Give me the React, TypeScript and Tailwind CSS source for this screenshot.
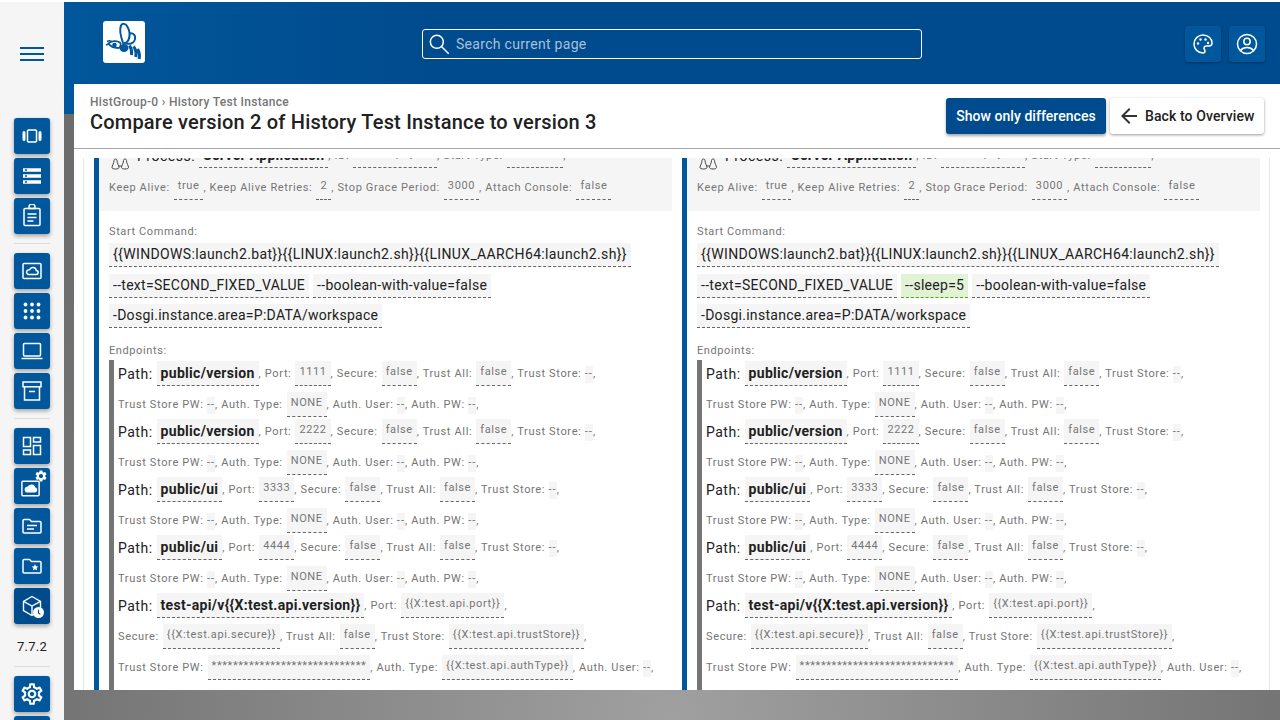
import type { ReactNode } from "react";
import { MdArrowBack, MdOutlineSettings, MdSettings } from "react-icons/md";

function Ico({ children, size = 24 }: { children: ReactNode; size?: number }) {
  return (
    <svg viewBox="0 0 24 24" width={size} height={size} fill="none" stroke="currentColor" strokeWidth="1.5">
      {children}
    </svg>
  );
}

function SideBtn({ children, active }: { children: ReactNode; active?: boolean }) {
  return (
    <div
      className={`relative flex h-9 w-9 shrink-0 items-center justify-center rounded-[3px] text-white shadow-[0_2px_4px_rgba(0,0,0,0.35)] ${
        active ? "bg-[#004b8d]" : "bg-[#01579b]"
      }`}
    >
      {children}
    </div>
  );
}

function Divider() {
  return <div className="my-[9px] h-px w-9 shrink-0 bg-[#dcdcdc]" />;
}

function Bee() {
  return (
    <svg viewBox="0 0 42 42" className="h-[42px] w-[42px]" fill="none" stroke="#01579b">
      <path d="M20 22C17.500 15 16.500 8 18 4.500c1.500-2.500 4.500-2 6 .5 2.500 4 3.500 9 1.500 14-1 2-3.500 3.500-5.500 3z" strokeWidth="2" />
      <path d="M26.500 12.500c2.500-.5 5 .5 5.500 3 .5 3-1 6-4 7-2 .5-4 .5-6-.5" strokeWidth="2" />
      <ellipse cx="21" cy="27" rx="4.500" ry="4" fill="#01579b" stroke="none" />
      <path d="M5.500 22.500c3-3 8.500-3 11.500-1 1.500 2 .5 5.500-2 5.500-4 0-7.500-1.500-9.500-4.500z" strokeWidth="1.800" />
      <circle cx="11.500" cy="24" r="2.300" fill="#01579b" stroke="none" />
      <path d="M9 21c-1-1.500-3-1.500-5-.5M6 23l-3 1" strokeWidth="1.500" />
      <path d="M26.500 24.500c2 3 2.500 6 2 9.500M30.500 25.500c2.500 3 2.800 7 2.300 10.500M34.500 28c2 3 2.300 6.500 1.700 10" strokeWidth="3" />
    </svg>
  );
}

function ProcessIcon() {
  return (
    <svg viewBox="0 0 20 16" className="ml-px mr-[7px] mt-[12px] h-4 w-5 shrink-0" fill="none" stroke="#444" strokeWidth="1">
      <path d="M2 12.500c0-2 2-4 2-7 0-2 3-2 3 0 0 3 2 5 2 7 0 2-7 2-7 0z" />
      <path d="M11.500 12.500c0-2 2-4 2-7 0-2 3-2 3 0 0 3 2 5 2 7 0 2-7 2-7 0z" />
      <path d="M9 11h2.500" />
    </svg>
  );
}

function CubeClock() {
  return (
    <>
      <svg viewBox="0 0 24 24" className="h-6 w-6" fill="none" stroke="white" strokeWidth="1.4">
        <path d="M12 2.500l8.500 4.800v9.400L12 21.500l-8.500-4.800V7.300z" />
        <path d="M3.500 7.300L12 12l8.500-4.700M12 12v9" />
      </svg>
      <svg viewBox="0 0 12 12" className="absolute bottom-[6px] right-[6px] h-[11px] w-[11px]">
        <circle cx="6" cy="6" r="6" fill="white" />
        <path d="M6 3v3.500l2 1.500" fill="none" stroke="#004b8d" strokeWidth="1.200" />
      </svg>
    </>
  );
}

const cloud = "M8.500 15.500h7.500a2 2 0 0 0 .3-4 3.500 3.500 0 0 0-6.700-.8 2.400 2.400 0 0 0-1.100 4.800z";

function Sidebar() {
  return (
    <div className="flex h-full w-16 shrink-0 flex-col items-center overflow-hidden bg-[#f5f5f5]">
      <div className="h-[116px] w-full shrink-0 pt-[40px]">
        <svg viewBox="0 0 24 24" className="mx-auto h-6 w-6" fill="#01579b">
          <rect x="0" y="5" width="24" height="2" />
          <rect x="0" y="11" width="24" height="2" />
          <rect x="0" y="17" width="24" height="2" />
        </svg>
      </div>
      <div className="flex flex-col gap-1">
        <SideBtn>
          <Ico>
            <rect x="7.500" y="6" width="9" height="12" rx="1" />
            <path d="M4 8.500v7M20 8.500v7" strokeWidth="3" strokeLinecap="round" />
          </Ico>
        </SideBtn>
        <SideBtn>
          <Ico>
            <path d="M3 6h18M3 12h18M3 18h18" strokeWidth="3.400" />
            <path d="M5 6h2M5 12h2M5 18h2" stroke="#01579b" strokeWidth="1.400" />
          </Ico>
        </SideBtn>
        <SideBtn>
          <Ico>
            <rect x="4" y="4.500" width="16" height="17" rx="1" />
            <path d="M9 4.500h6V3a3 3 0 0 0-6 0z" />
            <path d="M7.500 10h9M7.500 13.500h9M7.500 17h6" />
          </Ico>
        </SideBtn>
      </div>
      <Divider />
      <div className="flex flex-col gap-1">
        <SideBtn>
          <Ico>
            <rect x="3" y="4.500" width="18" height="15" rx="1" />
            <path d={cloud} />
          </Ico>
        </SideBtn>
        <SideBtn>
          <svg viewBox="0 0 24 24" width="24" height="24" fill="white">
            {[5.500, 12, 18.500].map((y) =>
              [5.500, 12, 18.500].map((x) => <circle key={`${x}-${y}`} cx={x} cy={y} r="1.900" />)
            )}
          </svg>
        </SideBtn>
        <SideBtn>
          <Ico>
            <rect x="3.500" y="4.500" width="17" height="12.500" rx="1" />
            <path d="M1.500 19.500h21" />
          </Ico>
        </SideBtn>
        <SideBtn>
          <Ico>
            <rect x="3" y="3" width="18" height="4.800" />
            <path d="M4.500 7.800V21h15V7.800M9 12.500h6" />
          </Ico>
        </SideBtn>
      </div>
      <Divider />
      <div className="flex flex-col gap-1">
        <SideBtn>
          <Ico>
            <rect x="3.500" y="3.500" width="7" height="9" />
            <rect x="13.500" y="3.500" width="7" height="4.500" />
            <rect x="3.500" y="16" width="7" height="4.500" />
            <rect x="13.500" y="11.500" width="7" height="9" />
          </Ico>
        </SideBtn>
        <SideBtn>
          <div className="mr-[3px] mt-[5px]">
            <Ico size={23}>
              <rect x="3" y="4.500" width="18" height="15" rx="1" />
              <path d={cloud} fill="currentColor" />
            </Ico>
          </div>
          <MdSettings size={14} className="absolute right-[2px] top-[1px]" />
        </SideBtn>
        <SideBtn>
          <Ico>
            <path d="M3 6.500a1 1 0 0 1 1-1h5.500l2 2H20a1 1 0 0 1 1 1V18a1 1 0 0 1-1 1H4a1 1 0 0 1-1-1z" />
            <path d="M7 11.500h10M7 15h7" />
          </Ico>
        </SideBtn>
        <SideBtn>
          <Ico>
            <path d="M3 6.500a1 1 0 0 1 1-1h5.500l2 2H20a1 1 0 0 1 1 1V18a1 1 0 0 1-1 1H4a1 1 0 0 1-1-1z" />
            <path d="M15 10l1 2.300 2.400.2-1.800 1.600.6 2.400-2.200-1.300-2.200 1.300.6-2.400-1.800-1.600 2.400-.2z" fill="currentColor" stroke="none" />
          </Ico>
        </SideBtn>
        <SideBtn active><CubeClock /></SideBtn>
      </div>
      <div className="flex h-[42px] shrink-0 items-center justify-center pt-[4px] text-[13px] tracking-[0.2px] text-[#212121]">
        7.7.2
      </div>
      <div className="mb-[9px] h-px w-9 shrink-0 bg-[#dcdcdc]" />
      <div className="flex flex-col gap-1">
        <SideBtn><MdOutlineSettings size={26} /></SideBtn>
        <SideBtn><span /></SideBtn>
      </div>
    </div>
  );
}

function Header() {
  return (
    <div className="flex h-[112px] items-start bg-[linear-gradient(90deg,#01579b,#004b8d_30%)]">
      <div className="ml-[39px] mt-[19px] h-[42px] w-[42px] shrink-0 rounded-[3px] bg-white">
        <Bee />
      </div>
      <div className="ml-[277px] mt-[27px] flex h-[30px] w-[500px] shrink-0 items-center rounded-[3px] border border-white pl-[3px] text-[14px] tracking-[0.3px] text-[#a9c0da]">
        <svg viewBox="0 0 24 24" width="26" height="26" fill="none" stroke="white" strokeWidth="1.400" className="mr-1">
          <circle cx="10" cy="10" r="6" />
          <path d="M14.500 14.500l6.500 6.500" />
        </svg>
        Search current page
      </div>
      <div className="ml-auto mr-[15px] mt-[24px] flex gap-2">
        <div className="flex h-9 w-9 items-center justify-center rounded-[3px] bg-[#01579b] text-white shadow-[0_1px_3px_rgba(0,0,0,0.35)]">
          <Ico>
            <path d="M12 3a9 9 0 0 0 0 18c1.500 0 2-1 2-2 0-1.500-1.500-2-1-3.500.3-1 1.200-1.500 2.500-1.500H18c2 0 3-1.500 3-3 0-4.500-4-8-9-8z" />
            <g fill="currentColor" stroke="none">
              <circle cx="7" cy="11.500" r="1.200" />
              <circle cx="9.500" cy="7.500" r="1.200" />
              <circle cx="14.500" cy="7.500" r="1.200" />
              <circle cx="17" cy="11" r="1.200" />
            </g>
          </Ico>
        </div>
        <div className="flex h-9 w-9 items-center justify-center rounded-[3px] bg-[#01579b] text-white shadow-[0_1px_3px_rgba(0,0,0,0.35)]">
          <Ico>
            <circle cx="12" cy="12" r="9.500" />
            <circle cx="12" cy="9.500" r="3.200" />
            <path d="M5.500 18.500c1.500-2 4-3 6.500-3s5 1 6.500 3" />
          </Ico>
        </div>
      </div>
    </div>
  );
}

function PageHead() {
  return (
    <div className="flex h-[65px] shrink-0 items-start justify-between border-b border-[#a8a8a8] pl-4 pr-4">
      <div className="pt-[10px]">
        <div className="text-[12px] font-medium leading-4 tracking-[0.3px] text-[#757575]">
          HistGroup-0 › History Test Instance
        </div>
        <div className="-mt-px text-[20px] font-medium leading-[26px] tracking-[0.2px] text-[#212121]">
          Compare version 2 of History Test Instance to version 3
        </div>
      </div>
      <div className="mt-[14px] flex gap-1">
        <div className="flex h-9 w-40 items-center justify-center rounded-[3px] bg-[#004b8d] text-[14px] font-medium tracking-[0.05px] text-white shadow-[0_2px_3px_rgba(0,0,0,0.35)]">
          Show only differences
        </div>
        <div className="flex h-9 w-[154px] items-center rounded-[3px] bg-white pl-[7px] text-[14px] font-medium tracking-[0.1px] text-[#212121] shadow-[0_1px_3px_rgba(0,0,0,0.4)]">
          <MdArrowBack size={24} className="mr-1 text-[#333]" />
          Back to Overview
        </div>
      </div>
    </div>
  );
}

// small boxed value of a label/value pair
function V({ children, big }: { children: ReactNode; big?: boolean }) {
  return (
    <span
      className={`inline-flex h-[25px] shrink-0 items-center border-b border-dashed border-[#666] bg-[#f5f5f5] px-1 ${
        big
          ? "text-[14px] font-bold tracking-[0.3px] text-[#212121]"
          : "pb-px text-[11px] tracking-[0.6px] text-[#757575]"
      }`}
    >
      {children}
    </span>
  );
}

function T({ children, gap = true }: { children: ReactNode; gap?: boolean }) {
  return (
    <span className={`inline-flex h-[25px] shrink-0 items-center whitespace-pre pt-[2px] text-[11px] tracking-[0.65px] text-[#757575] ${gap ? "mr-1" : ""}`}>
      {children}
    </span>
  );
}

function Dash() {
  return <span className="bg-[#f5f5f5] tracking-[1px]">--</span>;
}

function Big({ children }: { children: ReactNode }) {
  return <span className="mr-1 inline-flex h-[25px] shrink-0 items-center pt-[2px] text-[14px] tracking-[0.5px] text-[#212121]">{children}</span>;
}

function Row({ children, h }: { children: ReactNode; h: string }) {
  return <div className={`flex items-start whitespace-nowrap ${h}`}>{children}</div>;
}

function C({ children, added, wide }: { children: ReactNode; added?: boolean; wide?: boolean }) {
  return (
    <span
      className={`inline-flex h-6 shrink-0 items-center whitespace-pre border-b border-dashed px-1 text-[14px] text-[#212121] ${
        wide ? "tracking-[0.36px]" : "tracking-[0.28px]"
      } ${added ? "border-[#4caf00] bg-[#e1f2d6]" : "border-[#666] bg-[#f5f5f5]"}`}
    >
      {children}
    </span>
  );
}

function Endpoint({ path, port }: { path: string; port: string }) {
  return (
    <>
      <Row h="h-[31px]">
        <Big>Path:</Big>
        <V big>{path}</V>
        <T>{", Port:"}</T>
        <V>{port}</V>
        <T>{", Secure:"}</T>
        <V>false</V>
        <T>{", Trust All:"}</T>
        <V>false</V>
        <T gap={false}>
          {", Trust Store: "}
          <Dash />,
        </T>
      </Row>
      <Row h="h-[27px]">
        <T>
          {"Trust Store PW: "}
          <Dash />
          {", Auth. Type:"}
        </T>
        <V>NONE</V>
        <T gap={false}>
          {", Auth. User: "}
          <Dash />
          {", Auth. PW: "}
          <Dash />,
        </T>
      </Row>
    </>
  );
}

function Column({ diff }: { diff?: boolean }) {
  return (
    <div className="min-w-0 flex-1 border-l-[5px] border-[#01579b]">
      <div className="bg-[#f5f5f5] pb-[11px] pl-[10px] pt-0">
        <Row h="h-[32px]">
          <ProcessIcon />
          <Big>Process:</Big>
          <V big>Server Application</V>
          <T>{", ID:"}</T>
          <V>0bnf-eqo-yotd</V>
          <T>{", Start Type:"}</T>
          <V>MANUAL</V>
          <T gap={false}>,</T>
        </Row>
        <Row h="h-[25px]">
          <T>Keep Alive:</T>
          <V>true</V>
          <T>{", Keep Alive Retries:"}</T>
          <V>2</V>
          <T>{", Stop Grace Period:"}</T>
          <V>3000</V>
          <T>{", Attach Console:"}</T>
          <V>false</V>
        </Row>
      </div>
      <div className="pl-[10px]">
        <div className="mt-[13px] h-[19px] text-[11px] leading-4 tracking-[0.6px] text-[#757575]">Start Command:</div>
        <div className="flex flex-col items-start gap-[6.5px]">
          <C wide>{"{{WINDOWS:launch2.bat}}{{LINUX:launch2.sh}}{{LINUX_AARCH64:launch2.sh}}"}</C>
          <div className="flex gap-1">
            <C>--text=SECOND_FIXED_VALUE</C>
            {diff && <C added>--sleep=5</C>}
            <C>--boolean-with-value=false</C>
          </div>
          <C>-Dosgi.instance.area=P:DATA/workspace</C>
        </div>
        <div className="mt-[15px] h-[17px] text-[11px] leading-4 tracking-[0.6px] text-[#757575]">Endpoints:</div>
        <div className="border-l-[5px] border-[#757575] pb-6 pl-1 pt-px">
          <Endpoint path="public/version" port="1111" />
          <Endpoint path="public/version" port="2222" />
          <Endpoint path="public/ui" port="3333" />
          <Endpoint path="public/ui" port="4444" />
          <Row h="h-[31px]">
            <Big>Path:</Big>
            <V big>{"test-api/v{{X:test.api.version}}"}</V>
            <T>{", Port:"}</T>
            <V>{"{{X:test.api.port}}"}</V>
            <T gap={false}>,</T>
          </Row>
          <Row h="h-[31px]">
            <T>Secure:</T>
            <V>{"{{X:test.api.secure}}"}</V>
            <T>{", Trust All:"}</T>
            <V>false</V>
            <T>{", Trust Store:"}</T>
            <V>{"{{X:test.api.trustStore}}"}</V>
            <T gap={false}>,</T>
          </Row>
          <Row h="h-[31px]">
            <T>Trust Store PW:</T>
            <V>{"*".repeat(29)}</V>
            <T>{", Auth. Type:"}</T>
            <V>{"{{X:test.api.authType}}"}</V>
            <T gap={false}>
              {", Auth. User: "}
              <Dash />,
            </T>
          </Row>
        </div>
      </div>
    </div>
  );
}

export default function App() {
  return (
    <div className="flex h-screen w-full overflow-hidden bg-white pt-[2px] font-[Roboto,sans-serif]">
      <Sidebar />
      <div className="flex min-w-0 flex-1 flex-col bg-[radial-gradient(ellipse_at_50%_100%,#a0a0a0,#6c6c6c_85%)]">
        <Header />
        <div className="relative ml-[10px] -mt-[30px] flex h-[606px] flex-col bg-white">
          <PageHead />
          <div className="min-h-0 flex-1 pb-0 pl-[9px] pr-[10px] pt-[9px]">
            <div className="h-full overflow-hidden border-x border-[#e6e6e6] bg-white pl-[10px] pr-[9px]">
              <div className="-mt-[15px] flex w-full gap-[10px]">
                <Column />
                <Column diff />
              </div>
            </div>
          </div>
        </div>
      </div>
    </div>
  );
}
